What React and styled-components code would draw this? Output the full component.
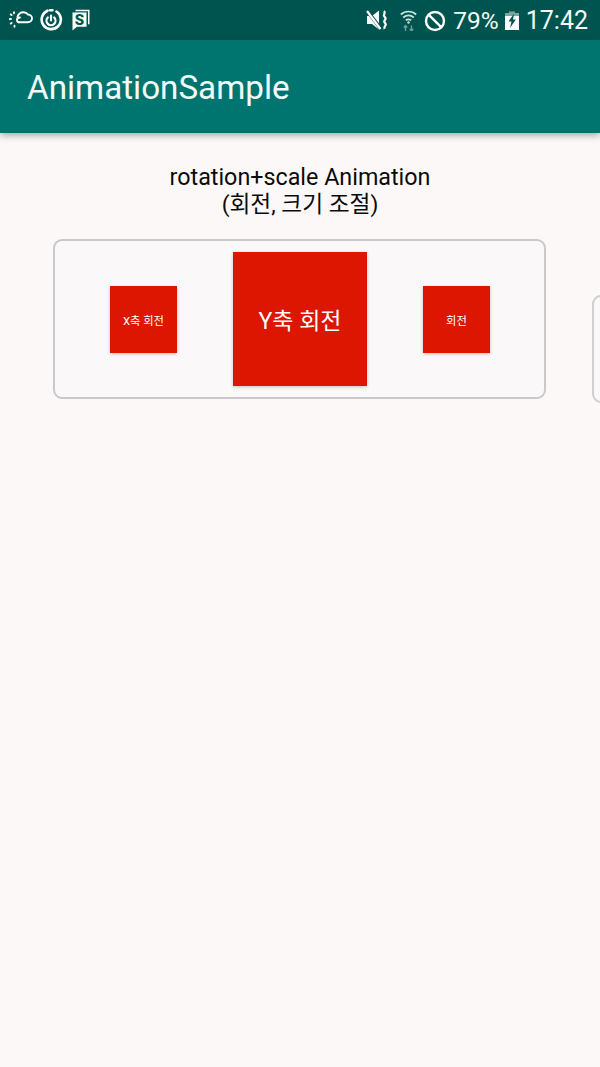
import React from 'react';
import styled, { createGlobalStyle } from 'styled-components';

const GlobalStyle = createGlobalStyle`
  html, body {
    margin: 0;
    padding: 0;
    background: #fbf8f7;
  }
  body {
    font-family: Roboto, "Noto Sans CJK KR", sans-serif;
  }
`;

const Screen = styled.div`
  width: 600px;
  height: 1067px;
  overflow: hidden;
  display: flex;
  flex-direction: column;
  background: #fbf8f7;
`;

const StatusBar = styled.div`
  height: 40px;
  flex: none;
  display: flex;
  align-items: center;
  justify-content: space-between;
  padding: 0 12px 0 9px;
  background: #00544f;
  color: #fff;
`;

const IconGroup = styled.div`
  display: flex;
  align-items: center;
  gap: 7px;
`;

const StatusText = styled.span`
  font-size: ${(p) => p.$size}px;
  color: #f4fbfa;
`;

const BlockSvg = styled.svg`
  margin-top: 2px;
`;

const BatterySvg = styled.svg`
  margin: 1px 0 0 -1px;
`;

const AppBar = styled.header`
  height: 93px;
  flex: none;
  display: flex;
  align-items: center;
  padding: 2px 0 0 27px;
  box-sizing: border-box;
  background: #007570;
  box-shadow: 0 2px 7px rgba(60, 50, 50, 0.45);
  position: relative;
`;

const AppTitle = styled.h1`
  margin: 0;
  font-size: 33.2px;
  font-weight: 400;
  color: #f2fbfa;
`;

const Heading = styled.div`
  margin-top: 30px;
  text-align: center;
  line-height: 28px;
  color: #0b0b0b;
`;

const HeadingLine = styled.div`
  font-size: ${(p) => p.$size}px;
`;

const Carousel = styled.div`
  margin-top: 20px;
  padding-left: 53px;
  display: flex;
  gap: 46px;
  align-items: flex-start;
`;

const Card = styled.div`
  flex: none;
  width: 493px;
  height: 160px;
  padding-left: 1px;
  box-sizing: border-box;
  display: flex;
  align-items: center;
  justify-content: center;
  gap: 56px;
  background: #faf8f9;
  border: 2px solid #c9c8ca;
  border-radius: 9px;
`;

const NextCard = styled.div`
  flex: none;
  width: 120px;
  height: 108px;
  margin-top: 56px;
  box-sizing: border-box;
  background: #faf8f9;
  border: 2px solid #d0cfd1;
  border-radius: 9px;
`;

const Tile = styled.div`
  width: ${(p) => (p.$big ? 134 : 67)}px;
  height: ${(p) => (p.$big ? 134 : 67)}px;
  margin-top: ${(p) => (p.$big ? 0 : 1)}px;
  display: flex;
  align-items: center;
  justify-content: center;
  background: #dc1600;
  color: #fff;
  font-size: ${(p) => (p.$big ? 23 : 11.3)}px;
  box-shadow: 0 1px 3px rgba(90, 70, 70, 0.3);
`;

const WeatherIcon = () => (
  <svg width="24" height="18" viewBox="0 0 24 18" fill="none" stroke="#fff" strokeWidth="1.900" strokeLinecap="round">
    <path d="M8.500 6c.8-3 3-4.800 6-4.800 2 0 3.500.8 4.500 2.300 2.200.1 4 1.700 4 3.800 0 2.300-1.800 4-4.200 4H9.500" />
    <path d="M11 6.500c-1.800 0-3 1.200-3 2.500s1 2.200 2 2.200" />
    <path d="M5 1.200v1M1.800 3.300l.8.8M.8 8h1.200M1.800 12.700l.8-.8M5.500 14.700v1" />
  </svg>
);

const TimerIcon = () => (
  <svg width="25" height="24" viewBox="0 0 25 24" fill="none" stroke="#fff" strokeLinecap="round">
    <path d="M7.500 2.700A9.600 9.600 0 1 0 16.500 3.500" strokeWidth="2.600" />
    <path d="M10 2.300a9.600 9.600 0 0 1 2.500 0" strokeWidth="2.600" />
    <path d="M7.800 9.500a4.500 4.500 0 1 0 6.400 0" strokeWidth="2.200" />
    <path d="M11 7.500v5" strokeWidth="2.200" />
  </svg>
);

const SwayIcon = () => (
  <svg width="18" height="22" viewBox="0 0 18 22">
    <path d="M3.500 0.800h14v14.500h-1.500V2.300h-12.500z" fill="#fff" />
    <path d="M0.500 3.500h14v14.300H5L0.500 21.500z" fill="#fff" />
    <text x="7.500" y="15.500" fontSize="15" fontWeight="900" textAnchor="middle" fill="#00544f" fontFamily="Roboto, sans-serif">S</text>
  </svg>
);

const MuteIcon = () => (
  <svg width="27" height="20" viewBox="0 0 27 20">
    <path d="M1 6h5l7-5.500v19L6 14H1z" fill="#fff" />
    <path d="M1 .5l14 18.500" stroke="#00544f" strokeWidth="3.600" />
    <path d="M1 1l13.500 18" stroke="#fff" strokeWidth="2.200" />
    <path d="M18 1c2.500 2.300-2 3.200.8 6s-2.500 3.200.2 6-2 3-.5 6" fill="none" stroke="#fff" strokeWidth="2.200" />
  </svg>
);

const WifiIcon = () => (
  <svg width="17" height="21" viewBox="0 0 17 21" fill="none" stroke="#cfe1df">
    <path d="M.8 4.500c4.400-4 11-4 15.400 0" strokeWidth="1.700" />
    <path d="M3.200 7.500c3.200-2.600 7.400-2.600 10.600 0" strokeWidth="1.700" />
    <path d="M5.800 10.300c1.700-1.200 3.700-1.200 5.400 0" strokeWidth="1.700" />
    <circle cx="8.500" cy="12.500" r="1.200" fill="#cfe1df" stroke="none" />
    <path d="M5.500 21v-5M3.800 17.500l1.700-2 1.700 2M11.500 15.500v5M9.800 19l1.700 2 1.700-2" stroke="#6f9d9a" strokeWidth="1.400" />
  </svg>
);

const BlockIcon = () => (
  <BlockSvg width="22" height="22" viewBox="0 0 22 22" fill="none" stroke="#fff" strokeWidth="2.400">
    <circle cx="11" cy="11" r="9" />
    <path d="M4.600 4.600l12.800 12.800" />
  </BlockSvg>
);

const BatteryIcon = () => (
  <BatterySvg width="14" height="19" viewBox="0 0 14 19">
    <path d="M4 0.500h6v1.500h4v5H0V2h4z" fill="#7fa5a2" />
    <path d="M0 5h14v14H0z" fill="#fff" />
    <path d="M9 2.500L3.500 10.500h3L5 17l5.800-8.500H8z" fill="#00544f" />
  </BatterySvg>
);

export default function App() {
  return (
    <Screen>
      <GlobalStyle />
      <StatusBar>
        <IconGroup>
          <WeatherIcon />
          <TimerIcon />
          <SwayIcon />
        </IconGroup>
        <IconGroup>
          <MuteIcon />
          <WifiIcon />
          <BlockIcon />
          <StatusText $size={24.5}>79%</StatusText>
          <BatteryIcon />
          <StatusText $size={25}>17:42</StatusText>
        </IconGroup>
      </StatusBar>
      <AppBar>
        <AppTitle>AnimationSample</AppTitle>
      </AppBar>
      <Heading>
        <HeadingLine $size={23.3}>rotation+scale Animation</HeadingLine>
        <HeadingLine $size={22.7}>(회전, 크기 조절)</HeadingLine>
      </Heading>
      <Carousel>
        <Card>
          <Tile>X축 회전</Tile>
          <Tile $big>Y축 회전</Tile>
          <Tile>회전</Tile>
        </Card>
        <NextCard />
      </Carousel>
    </Screen>
  );
}
